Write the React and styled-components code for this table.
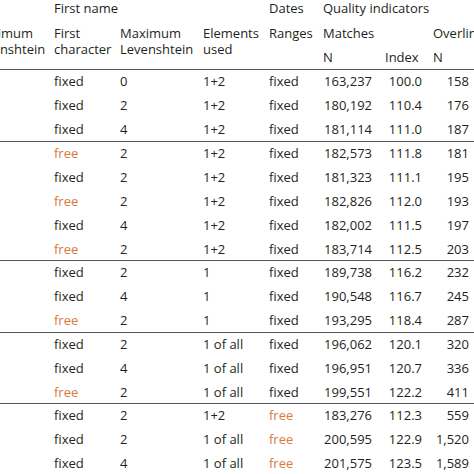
import styled, { createGlobalStyle } from 'styled-components';

const GlobalStyle = createGlobalStyle`
  html, body {
    margin: 0;
    padding: 0;
    background: #ffffff;
    overflow: hidden;
  }
  body {
    font-family: "Open Sans", "Liberation Sans", sans-serif;
    color: #231f20;
  }
`;

const columns = '82px 66px 83px 66px 54px 62px 48px 60px';

const groups = [
  [
    ['fixed', '0', '1+2', 'fixed', '163,237', '100.0', '158'],
    ['fixed', '2', '1+2', 'fixed', '180,192', '110.4', '176'],
    ['fixed', '4', '1+2', 'fixed', '181,114', '111.0', '187'],
  ],
  [
    ['free', '2', '1+2', 'fixed', '182,573', '111.8', '181'],
    ['fixed', '2', '1+2', 'fixed', '181,323', '111.1', '195'],
    ['free', '2', '1+2', 'fixed', '182,826', '112.0', '193'],
    ['fixed', '4', '1+2', 'fixed', '182,002', '111.5', '197'],
    ['free', '2', '1+2', 'fixed', '183,714', '112.5', '203'],
  ],
  [
    ['fixed', '2', '1', 'fixed', '189,738', '116.2', '232'],
    ['fixed', '4', '1', 'fixed', '190,548', '116.7', '245'],
    ['free', '2', '1', 'fixed', '193,295', '118.4', '287'],
  ],
  [
    ['fixed', '2', '1 of all', 'fixed', '196,062', '120.1', '320'],
    ['fixed', '4', '1 of all', 'fixed', '196,951', '120.7', '336'],
    ['free', '2', '1 of all', 'fixed', '199,551', '122.2', '411'],
  ],
  [
    ['fixed', '2', '1+2', 'free', '183,276', '112.3', '559'],
    ['fixed', '2', '1 of all', 'free', '200,595', '122.9', '1,520'],
    ['fixed', '4', '1 of all', 'free', '201,575', '123.5', '1,589'],
  ],
];

const App = () => {
  return (
    <>
      <GlobalStyle />
      <Table>
        <Header>
          <HeadCell $col={2} $row={1}>First name</HeadCell>
          <HeadCell $col={5} $row={1}>Dates</HeadCell>
          <HeadCell $col={6} $row={1} $span={3}>Quality indicators</HeadCell>

          <HeadCell $col={1} $row={2} $rows={2}>Maximum<br />Levenshtein</HeadCell>
          <HeadCell $col={2} $row={2} $rows={2}>First<br />character</HeadCell>
          <HeadCell $col={3} $row={2} $rows={2}>Maximum<br />Levenshtein</HeadCell>
          <HeadCell $col={4} $row={2} $rows={2}>Elements<br />used</HeadCell>
          <HeadCell $col={5} $row={2}>Ranges</HeadCell>
          <HeadCell $col={6} $row={2} $span={2}>Matches</HeadCell>
          <HeadCell $col={8} $row={2}>Overlinkage</HeadCell>

          <HeadCell $col={6} $row={3}>N</HeadCell>
          <HeadCell $col={7} $row={3}>Index</HeadCell>
          <HeadCell $col={8} $row={3}>N</HeadCell>
        </Header>

        {groups.map((group, g) => (
          <Group key={g}>
            {group.map((row, r) => (
              <Row key={r}>
                <Cell />
                {row.slice(0, 4).map((value, c) => (
                  <Cell key={c} $free={value === 'free'}>{value}</Cell>
                ))}
                <NumCell $pad={13}>{row[4]}</NumCell>
                <NumCell $pad={11}>{row[5]}</NumCell>
                <NumCell $pad={24}>{row[6]}</NumCell>
              </Row>
            ))}
          </Group>
        ))}
      </Table>
    </>
  );
};

const Table = styled.div`
  width: 521px;
  margin-left: -28px;
  font-size: 13px;
`;

const Header = styled.div`
  display: grid;
  grid-template-columns: ${columns};
  grid-template-rows: 25px 24px 20px;
  border-bottom: 1.5px solid #555;
`;

const HeadCell = styled.div`
  grid-column: ${(p) => p.$col} / span ${(p) => p.$span || 1};
  grid-row: ${(p) => p.$row} / span ${(p) => p.$rows || 1};
  line-height: 16px;
  white-space: nowrap;
`;

const Group = styled.div`
  border-bottom: 1.5px solid #555;
  & > div:last-child {
    height: 22.5px;
  }
`;

const Row = styled.div`
  display: grid;
  grid-template-columns: ${columns};
  height: 24px;
  align-items: start;
`;

const Cell = styled.div`
  line-height: 23px;
  white-space: nowrap;
  color: ${(p) => (p.$free ? '#dc7a3d' : '#231f20')};
`;

const NumCell = styled(Cell)`
  text-align: right;
  padding-right: ${(p) => p.$pad}px;
`;

export default App;
